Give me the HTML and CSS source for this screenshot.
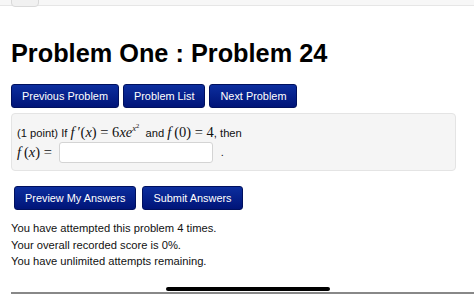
FILE: index.html
```html
<!DOCTYPE html>
<html>
<head>
<meta charset="utf-8">
<link rel="stylesheet" href="styles.css">
</head>
<body>
<div class="topstrip"><div class="topbtn"></div></div>
<div class="page">
  <h1 class="title">Problem One : Problem 24</h1>
  <div class="nav">
    <span class="btn">Previous Problem</span>
    <span class="btn">Problem List</span>
    <span class="btn">Next Problem</span>
  </div>
  <div class="problem">
    <div class="line1">(1 point) If <span class="math"><i>f</i>&thinsp;′(<i>x</i>) = 6<i>xe</i><sup><i>x</i><span class="sq">2</span></sup></span>&nbsp; and <span class="math"><i>f</i>&thinsp;(0) = 4</span>, then</div>
    <div class="line2"><span class="math"><i>f</i>&thinsp;(<i>x</i>) =</span><span class="answer"></span><span class="dot">.</span></div>
  </div>
  <div class="actions">
    <span class="btn">Preview My Answers</span>
    <span class="btn">Submit Answers</span>
  </div>
  <div class="status">
    <p>You have attempted this problem 4 times.</p>
    <p>Your overall recorded score is 0%.</p>
    <p>You have unlimited attempts remaining.</p>
  </div>
  <div class="homebar"></div>
  <div class="rule"></div>
</div>
</body>
</html>
```
FILE: styles.css
```css
html, body {
  margin: 0;
  padding: 0;
  background: #ffffff;
  font-family: "Liberation Sans", Arial, sans-serif;
  color: #111;
}
.topstrip {
  height: 5px;
  background: #f7f7f7;
  border-bottom: 1px solid #e6e6e6;
  position: relative;
}
.topbtn {
  position: absolute;
  left: 11px;
  top: -3px;
  width: 26px;
  height: 8px;
  background: #f1f1f1;
  border: 1px solid #d9d9d9;
  border-radius: 0 0 4px 4px;
}
.page {
  padding-left: 11px;
}
.title {
  margin: 32px 0 0 0;
  font-size: 25.3px;
  line-height: 30px;
  font-weight: bold;
  color: #000;
}
.nav {
  margin-top: 16px;
  display: flex;
  gap: 4px;
}
.btn {
  display: inline-block;
  height: 22px;
  line-height: 22px;
  padding: 0 10px;
  font-size: 10.9px;
  color: #ffffff;
  background: linear-gradient(#0c2e9e, #001478);
  border: 1px solid #00105e;
  border-radius: 3px;
  white-space: nowrap;
}
.problem {
  margin-top: 5px;
  width: 433px;
  padding: 10px 5px 7px 5px;
  background: #f5f5f5;
  border: 1px solid #e4e4e4;
  border-radius: 4px;
  font-size: 11.2px;
}
.line1 {
  height: 17px;
  line-height: 17px;
  white-space: nowrap;
}
.math {
  font-family: "Liberation Serif", "Times New Roman", serif;
  font-size: 14.5px;
}
.math sup {
  font-size: 8.5px;
  vertical-align: 6px;
  line-height: 0;
}
.sq {
  font-style: normal;
  font-size: 6.5px;
  vertical-align: 3px;
}
.line2 {
  height: 22px;
  display: flex;
  align-items: center;
}
.answer {
  display: inline-block;
  margin-left: 7px;
  width: 152px;
  height: 19px;
  background: #ffffff;
  border: 1px solid #d4d4d4;
  border-radius: 3px;
}
.dot {
  margin-left: 8px;
  font-size: 11px;
}
.actions {
  margin-top: 15px;
  margin-left: 3px;
  display: flex;
  gap: 6px;
}
.status {
  margin-top: 10px;
  font-size: 11.2px;
  line-height: 16.5px;
  color: #111;
}
.status p {
  margin: 0;
}
.homebar {
  margin-top: 17px;
  margin-left: 155px;
  width: 164px;
  height: 4px;
  border-radius: 2px;
  background: #000;
}
.rule {
  margin-top: 1px;
  height: 2px;
  background: #888;
}
```
